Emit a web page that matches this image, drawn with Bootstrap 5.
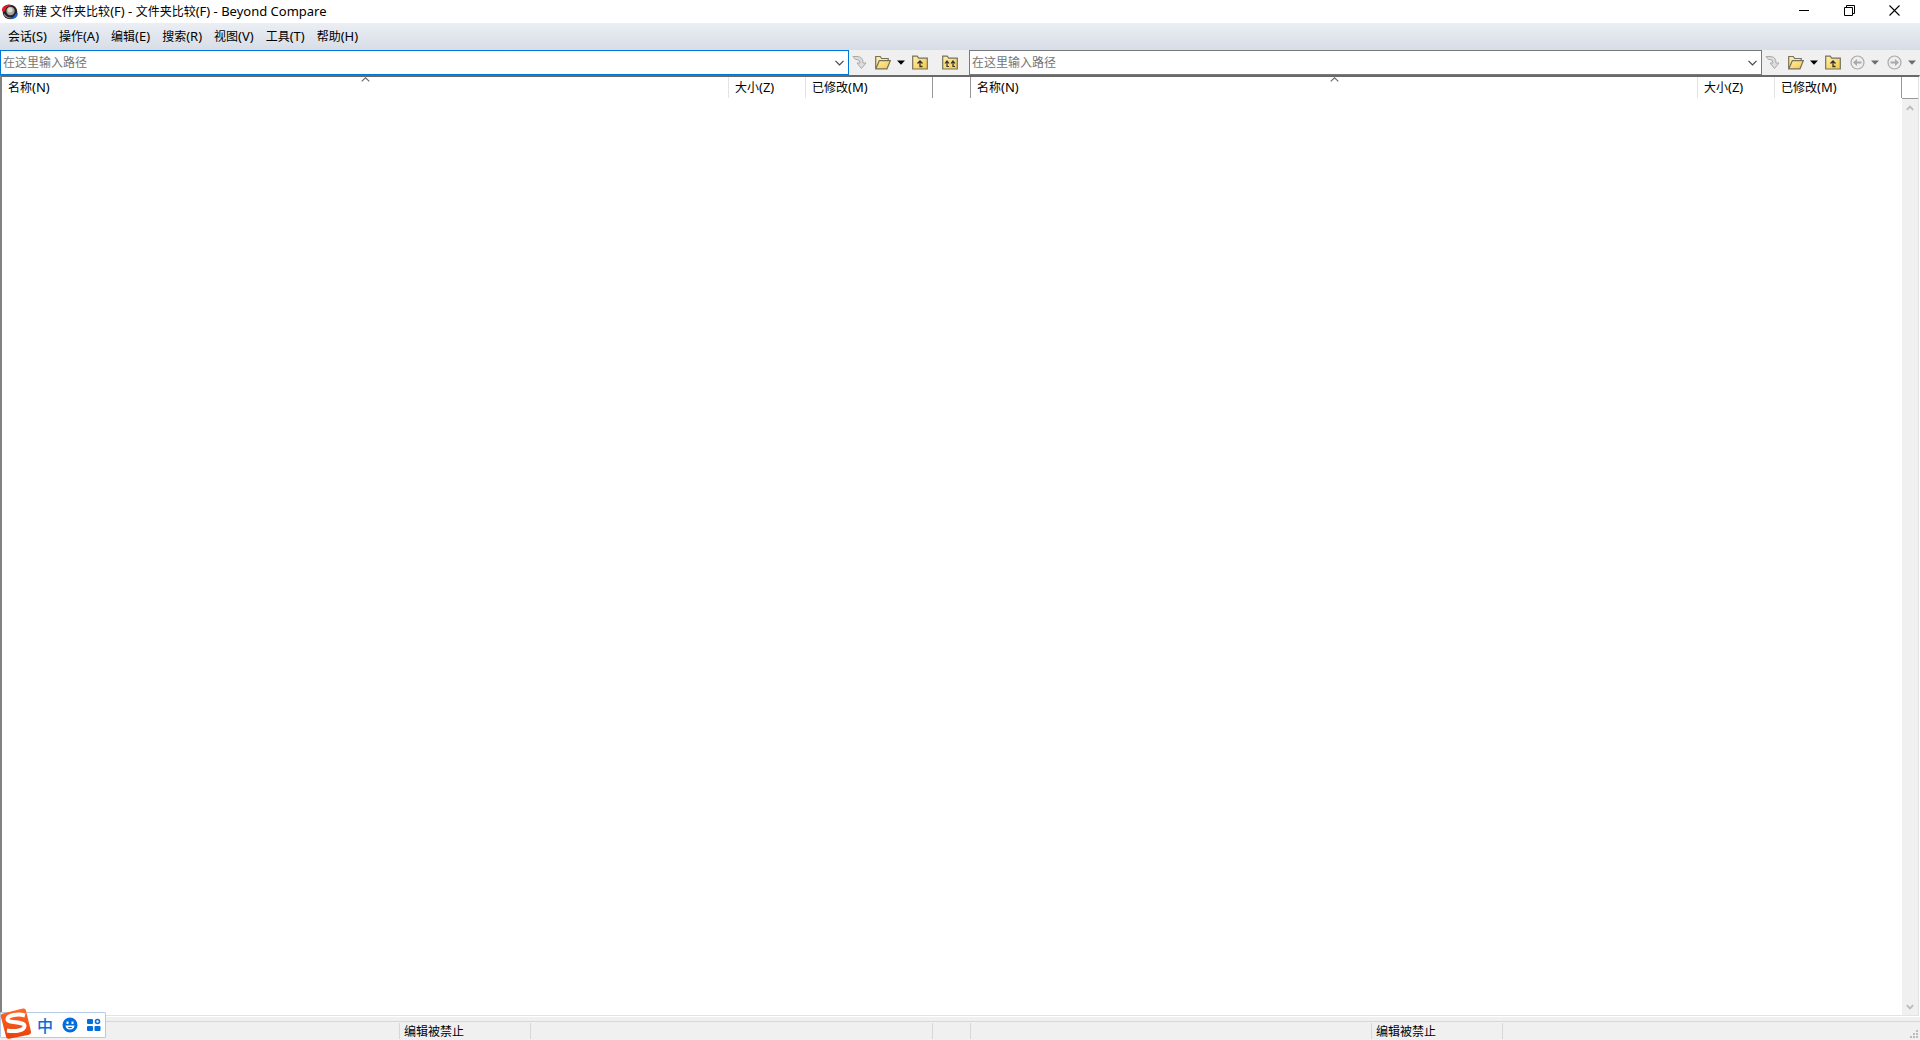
<!DOCTYPE html>
<html lang="zh-CN">
<head>
<meta charset="utf-8">
<meta name="viewport" content="width=device-width, initial-scale=1">
<title>新建 文件夹比较(F) - 文件夹比较(F) - Beyond Compare</title>
<link href="https://cdn.jsdelivr.net/npm/bootstrap@5.3.0/dist/css/bootstrap.min.css" rel="stylesheet">
<style>
body { font-family: "Noto Sans", "Noto Sans CJK SC", sans-serif; font-size: 12px; line-height: 16px; color: #000; background: #f0f0f0; }
button { border: 0; background: transparent; padding: 0; color: inherit; }
svg { display: block; }
.latin { font-size: 13px; }
.titlebar { height: 23px; background: #fff; padding-right: 3px; }
.app-title { font-size: 12px; line-height: 22px; font-weight: 400; }
.win-btn { width: 45px; height: 20px; display: flex; align-items: center; justify-content: center; }
.menubar { height: 27px; padding-left: 8px; gap: 12px; background: linear-gradient(#ebeff4, #d7dde7); }
.menubar a { color: #000; text-decoration: none; line-height: 27px; }
.split { display: grid; grid-template-columns: 969fr 951fr; }
.tools { height: 25px; }
.combo { background: #fff; border: 1px solid #7a7a7a; height: 25px; }
.active-path { border-color: #0078d7; }
.combo input { border: 0; outline: 0; padding: 0 0 0 2px; background: transparent; line-height: 16px; }
.combo input::placeholder { color: #757575; opacity: 1; }
.combo button { width: 17px; display: flex; align-items: center; justify-content: center; }
.tool-set { width: 120px; padding-left: 2px; }
.tool-set.wide-set { width: 158px; }
.tool { height: 24px; display: flex; align-items: center; justify-content: center; flex: none; width: 16px; }
.tool.caret { width: 8px; margin-left: 6px; }
.tool.caret + .tool { margin-left: 7px; }
.tool.both { margin-left: 14px; }
.caret.idle { color: #6d6d6d; }
.compare { grid-template-columns: 968fr 948fr; border: solid; border-width: 2px 1px 1px 2px; border-color: #696969 #fff #fff #828282; box-shadow: inset -1px -1px #e3e3e3; background: #fff; padding: 0 1px 1px 0; }
.pane-left { position: relative; padding-right: 37px; }
.pane-right { position: relative; padding-right: 16px; }
.cols { table-layout: fixed; width: 100%; border-collapse: separate; border-spacing: 0; }
.cols th { position: relative; height: 21px; font-weight: 400; line-height: 21px; padding: 0 0 0 6px; border-right: 1px solid #e3e3e3; vertical-align: top; }
.cols th:last-child { border-right-color: #989898; }
.pane-right .cols { border-left: 1px solid #989898; }
.cols .size-col { width: 77px; }
.cols .date-col { width: 127px; }
.sort { position: absolute; top: 0; left: 50%; margin-left: -4px; }
.scroll-track { position: absolute; right: 0; top: 0; bottom: 0; width: 16px; background: #f0f0f0; }
.scroll-head { height: 22px; background: #fff; border-bottom: 1px solid #989898; }
.scroll-track button { width: 16px; height: 17px; display: flex; align-items: center; justify-content: center; }
.statusbar { height: 19px; margin-top: 4px; border-top: 1px solid #d7d7d7; padding-top: 1px; display: grid; grid-template-columns: 400fr 131px 402fr 38px 401fr 131px 417fr; }
.statusbar > div { border-right: 1px solid #d7d7d7; padding-left: 4px; height: 16px; line-height: 18px; }
.statusbar > div:last-child { border: 0; }
.grip { position: absolute; right: 2px; bottom: 2px; }
.ime { position: absolute; left: 0; bottom: 2px; width: 106px; height: 26px; background: #fff; border: 1px solid #b5cbe5; border-radius: 1px; padding-left: 36px; gap: 9px; color: #006fdb; }
.ime-logo { position: absolute; left: -1px; bottom: -2px; }
.ime-mode { font-size: 16px; line-height: 24px; font-weight: 500; width: 16px; font-family: "Noto Sans CJK SC", sans-serif; }
</style>
<script src="https://cdn.jsdelivr.net/npm/bootstrap@5.3.0/dist/js/bootstrap.bundle.min.js"></script>
</head>
<body>
<svg width="0" height="0" class="position-absolute" aria-hidden="true">
  <defs>
    <linearGradient id="gold" x1="0" y1="0" x2="1" y2="1"><stop offset="0" stop-color="#fff0ad"/><stop offset="1" stop-color="#f4c744"/></linearGradient>
    <linearGradient id="orange" x1="0" y1="0" x2="0" y2="1"><stop offset="0" stop-color="#ff6a26"/><stop offset="1" stop-color="#e8410b"/></linearGradient>
    <symbol id="i-chev" viewBox="0 0 9 6"><path d="M.5 .8 4.5 4.8 8.5 .8" fill="none" stroke="#444" stroke-width="1.2"/></symbol>
    <symbol id="i-go" viewBox="0 0 15 15"><path d="M1 1.500h4q6 0 6 6.500h3l-4.500 5.500L5 8h3q0-3.500-3-3.500H3.500z" fill="#ddd" stroke="#aaa"/></symbol>
    <symbol id="i-open" viewBox="0 0 16 15"><path d="M.7 13.500V1.500h4.500l1.500 2h6.500v2.500" fill="#ffeaa0" stroke="#77705d" stroke-width="1.200"/><path d="M.8 13.800 4.300 5.700h11l-3.300 8.100z" fill="url(#gold)" stroke="#77705d" stroke-width="1.200"/></symbol>
    <symbol id="i-folder" viewBox="0 0 16 15"><path d="M.7 14V1.200h4.500l1.500 2h8.600V14z" fill="url(#gold)" stroke="#77705d" stroke-width="1.200"/></symbol>
    <symbol id="i-caret" viewBox="0 0 8 5"><path d="M0 .5h8L4 4.700z" fill="currentColor"/></symbol>
    <symbol id="i-back" viewBox="0 0 15 15"><circle cx="7.500" cy="7.500" r="6.500" fill="#eee" stroke="#aaa" stroke-width="1.200"/><path d="M3 7.500 7 4v2.500h4.500v2H7V11z" fill="#aaa"/></symbol>
    <symbol id="i-sort" viewBox="0 0 9 5"><path d="M.7 4.300 4.500 .8 8.300 4.300" fill="none" stroke="#666" stroke-width="1.100"/></symbol>
  </defs>
</svg>

<div class="min-vh-100 d-flex flex-column position-relative overflow-hidden">
  <header class="titlebar d-flex">
    <svg class="mt-1 me-1 flex-shrink-0" width="19" height="16" viewBox="0 0 19 16">
      <circle cx="10" cy="8" r="7.300" fill="#242327"/>
      <path d="M2 7Q1.500 3 5 1.500L9 .3 11 2Q6 2 5.500 6L4 8z" fill="#db1c24"/>
      <path d="M18 9q0 3-2.500 5l-3.500 1.300-1.500-1.300q4-1 4.500-4z" fill="#1663dc"/>
      <circle cx="10.500" cy="7" r="4.200" fill="#aaa59d"/><circle cx="10" cy="6" r="2.500" fill="#dedbd1"/>
      <path d="M4 10q2 4 7 4" fill="none" stroke="#888" stroke-width="1.200"/>
    </svg>
    <h1 class="app-title m-0 flex-grow-1">新建 文件夹比较<span class="latin">(F) - </span>文件夹比较<span class="latin">(F) - Beyond Compare</span></h1>
    <div class="d-flex">
      <button class="win-btn" aria-label="最小化"><svg width="11" height="11"><path d="M0 5.500h10" stroke="#000"/></svg></button>
      <button class="win-btn" aria-label="还原"><svg width="11" height="11" fill="none" stroke="#000"><path d="M.5 2.500h8v8h-8zM2.500 2.500v-2h8v8h-2"/></svg></button>
      <button class="win-btn" aria-label="关闭"><svg width="11" height="11"><path d="M.5.500l10 10M10.500.500l-10 10" stroke="#000" stroke-width="1.100"/></svg></button>
    </div>
  </header>

  <nav class="menubar d-flex" aria-label="主菜单">
    <a href="#">会话<span class="latin">(S)</span></a><a href="#">操作<span class="latin">(A)</span></a><a href="#">编辑<span class="latin">(E)</span></a><a href="#">搜索<span class="latin">(R)</span></a><a href="#">视图<span class="latin">(V)</span></a><a href="#">工具<span class="latin">(T)</span></a><a href="#">帮助<span class="latin">(H)</span></a>
  </nav>

  <div class="split">
    <div class="tools d-flex">
      <div class="combo active-path d-flex flex-grow-1"><input class="flex-grow-1" type="text" placeholder="在这里输入路径" aria-label="左侧路径"><button aria-label="左侧历史路径"><svg width="9" height="6"><use href="#i-chev"/></svg></button></div>
      <div class="tool-set d-flex">
        <button class="tool" aria-label="转到"><svg width="15" height="15"><use href="#i-go"/></svg></button>
        <button class="tool ms-2" aria-label="浏览文件夹"><svg width="16" height="15"><use href="#i-open"/></svg></button>
        <button class="tool caret" aria-label="浏览选项"><svg width="8" height="5"><use href="#i-caret"/></svg></button>
        <button class="tool" aria-label="上一级"><svg width="16" height="15"><use href="#i-folder"/><path d="M8 6v5.500h2.500M5.500 8.500 8 6l2.500 2.500" fill="none" stroke="#333" stroke-width="1.300"/></svg></button>
        <button class="tool both" aria-label="两侧上一级"><svg width="16" height="15"><use href="#i-folder"/><path d="M5 6v5.500h2M3 8.500 5 6l2 2.500M11 6v5.500h2M9 8.500 11 6l2 2.500" fill="none" stroke="#333" stroke-width="1.200"/></svg></button>
      </div>
    </div>
    <div class="tools d-flex">
      <div class="combo d-flex flex-grow-1"><input class="flex-grow-1" type="text" placeholder="在这里输入路径" aria-label="右侧路径"><button aria-label="右侧历史路径"><svg width="9" height="6"><use href="#i-chev"/></svg></button></div>
      <div class="tool-set wide-set d-flex">
        <button class="tool" aria-label="转到"><svg width="15" height="15"><use href="#i-go"/></svg></button>
        <button class="tool ms-2" aria-label="浏览文件夹"><svg width="16" height="15"><use href="#i-open"/></svg></button>
        <button class="tool caret" aria-label="浏览选项"><svg width="8" height="5"><use href="#i-caret"/></svg></button>
        <button class="tool" aria-label="上一级"><svg width="16" height="15"><use href="#i-folder"/><path d="M8 6v5.500h2.500M5.500 8.500 8 6l2.500 2.500" fill="none" stroke="#333" stroke-width="1.300"/></svg></button>
        <button class="tool ms-2" aria-label="后退"><svg width="15" height="15"><use href="#i-back"/></svg></button>
        <button class="tool caret idle" aria-label="后退历史"><svg width="8" height="5"><use href="#i-caret"/></svg></button>
        <button class="tool" aria-label="前进"><svg width="15" height="15"><g transform="translate(15 0) scale(-1 1)"><use href="#i-back"/></g></svg></button>
        <button class="tool caret idle" aria-label="前进历史"><svg width="8" height="5"><use href="#i-caret"/></svg></button>
      </div>
    </div>
  </div>

  <main class="compare split flex-grow-1">
    <section class="pane-left">
      <table class="cols"><thead><tr>
        <th scope="col">名称<span class="latin">(N)</span><svg class="sort" width="9" height="5"><use href="#i-sort"/></svg></th><th scope="col" class="size-col">大小<span class="latin">(Z)</span></th><th scope="col" class="date-col">已修改<span class="latin">(M)</span></th>
      </tr></thead></table>
    </section>
    <section class="pane-right">
      <table class="cols"><thead><tr>
        <th scope="col">名称<span class="latin">(N)</span><svg class="sort" width="9" height="5"><use href="#i-sort"/></svg></th><th scope="col" class="size-col">大小<span class="latin">(Z)</span></th><th scope="col" class="date-col">已修改<span class="latin">(M)</span></th>
      </tr></thead></table>
      <div class="scroll-track d-flex flex-column">
        <div class="scroll-head"></div>
        <button aria-label="向上滚动"><svg width="8" height="6" viewBox="0 0 8 6"><path d="M.8 4.800 4 1.500l3.200 3.300" fill="none" stroke="#bbb" stroke-width="1.800"/></svg></button>
        <button class="mt-auto" aria-label="向下滚动"><svg width="8" height="6" viewBox="0 0 8 6"><path d="M.8 1.200 4 4.500l3.200-3.300" fill="none" stroke="#bbb" stroke-width="1.800"/></svg></button>
      </div>
    </section>
  </main>

  <footer class="statusbar"><div></div><div>编辑被禁止</div><div></div><div></div><div></div><div>编辑被禁止</div><div></div></footer>
  <svg class="grip" width="8" height="8" fill="#bbb"><path d="M6 0h2v2H6zM3 3h2v2H3zM6 3h2v2H6zM0 6h2v2H0zM3 6h2v2H3zM6 6h2v2H6z"/></svg>

  <div class="ime d-flex align-items-center">
    <svg class="ime-logo" width="32" height="31" viewBox="0 0 32 31">
      <path d="M3 5.500 23 .5q2.500-.5 3 2l5 21q.5 2.500-2 3.200l-20 4Q6.500 31.200 6 28.500L.8 8.500Q.3 6 3 5.500z" fill="url(#orange)"/>
      <path d="M25 7.500C18 5.500 8 7 7.500 11c-.5 4.500 17 2 17 7 0 4.500-9 6-17.500 4.500" fill="none" stroke="#fff" stroke-width="4"/>
    </svg>
    <button class="ime-mode" aria-label="中文输入">中</button>
    <button aria-label="表情"><svg width="16" height="16"><circle cx="8" cy="8" r="7.500" fill="#006fdb"/><path d="M4.500 4.500h2v2.500h-2zM9.500 4.500h2v2.500h-2z" fill="#fff"/><path d="M3.500 8.500h9q-.5 4-4.500 4t-4.500-4z" fill="#fff"/><path d="M5.500 10h5q-1 1.300-2.500 1.300T5.500 10z" fill="#006fdb"/></svg></button>
    <button aria-label="工具箱"><svg width="14" height="14" fill="#006fdb"><rect x="0" y="1" width="6" height="5" rx="1"/><circle cx="10.500" cy="3.500" r="2" fill="none" stroke="#006fdb" stroke-width="1.600"/><rect x="0" y="8" width="6" height="5" rx="1"/><rect x="7.500" y="8" width="6" height="5" rx="1"/></svg></button>
  </div>
</div>
</body>
</html>
